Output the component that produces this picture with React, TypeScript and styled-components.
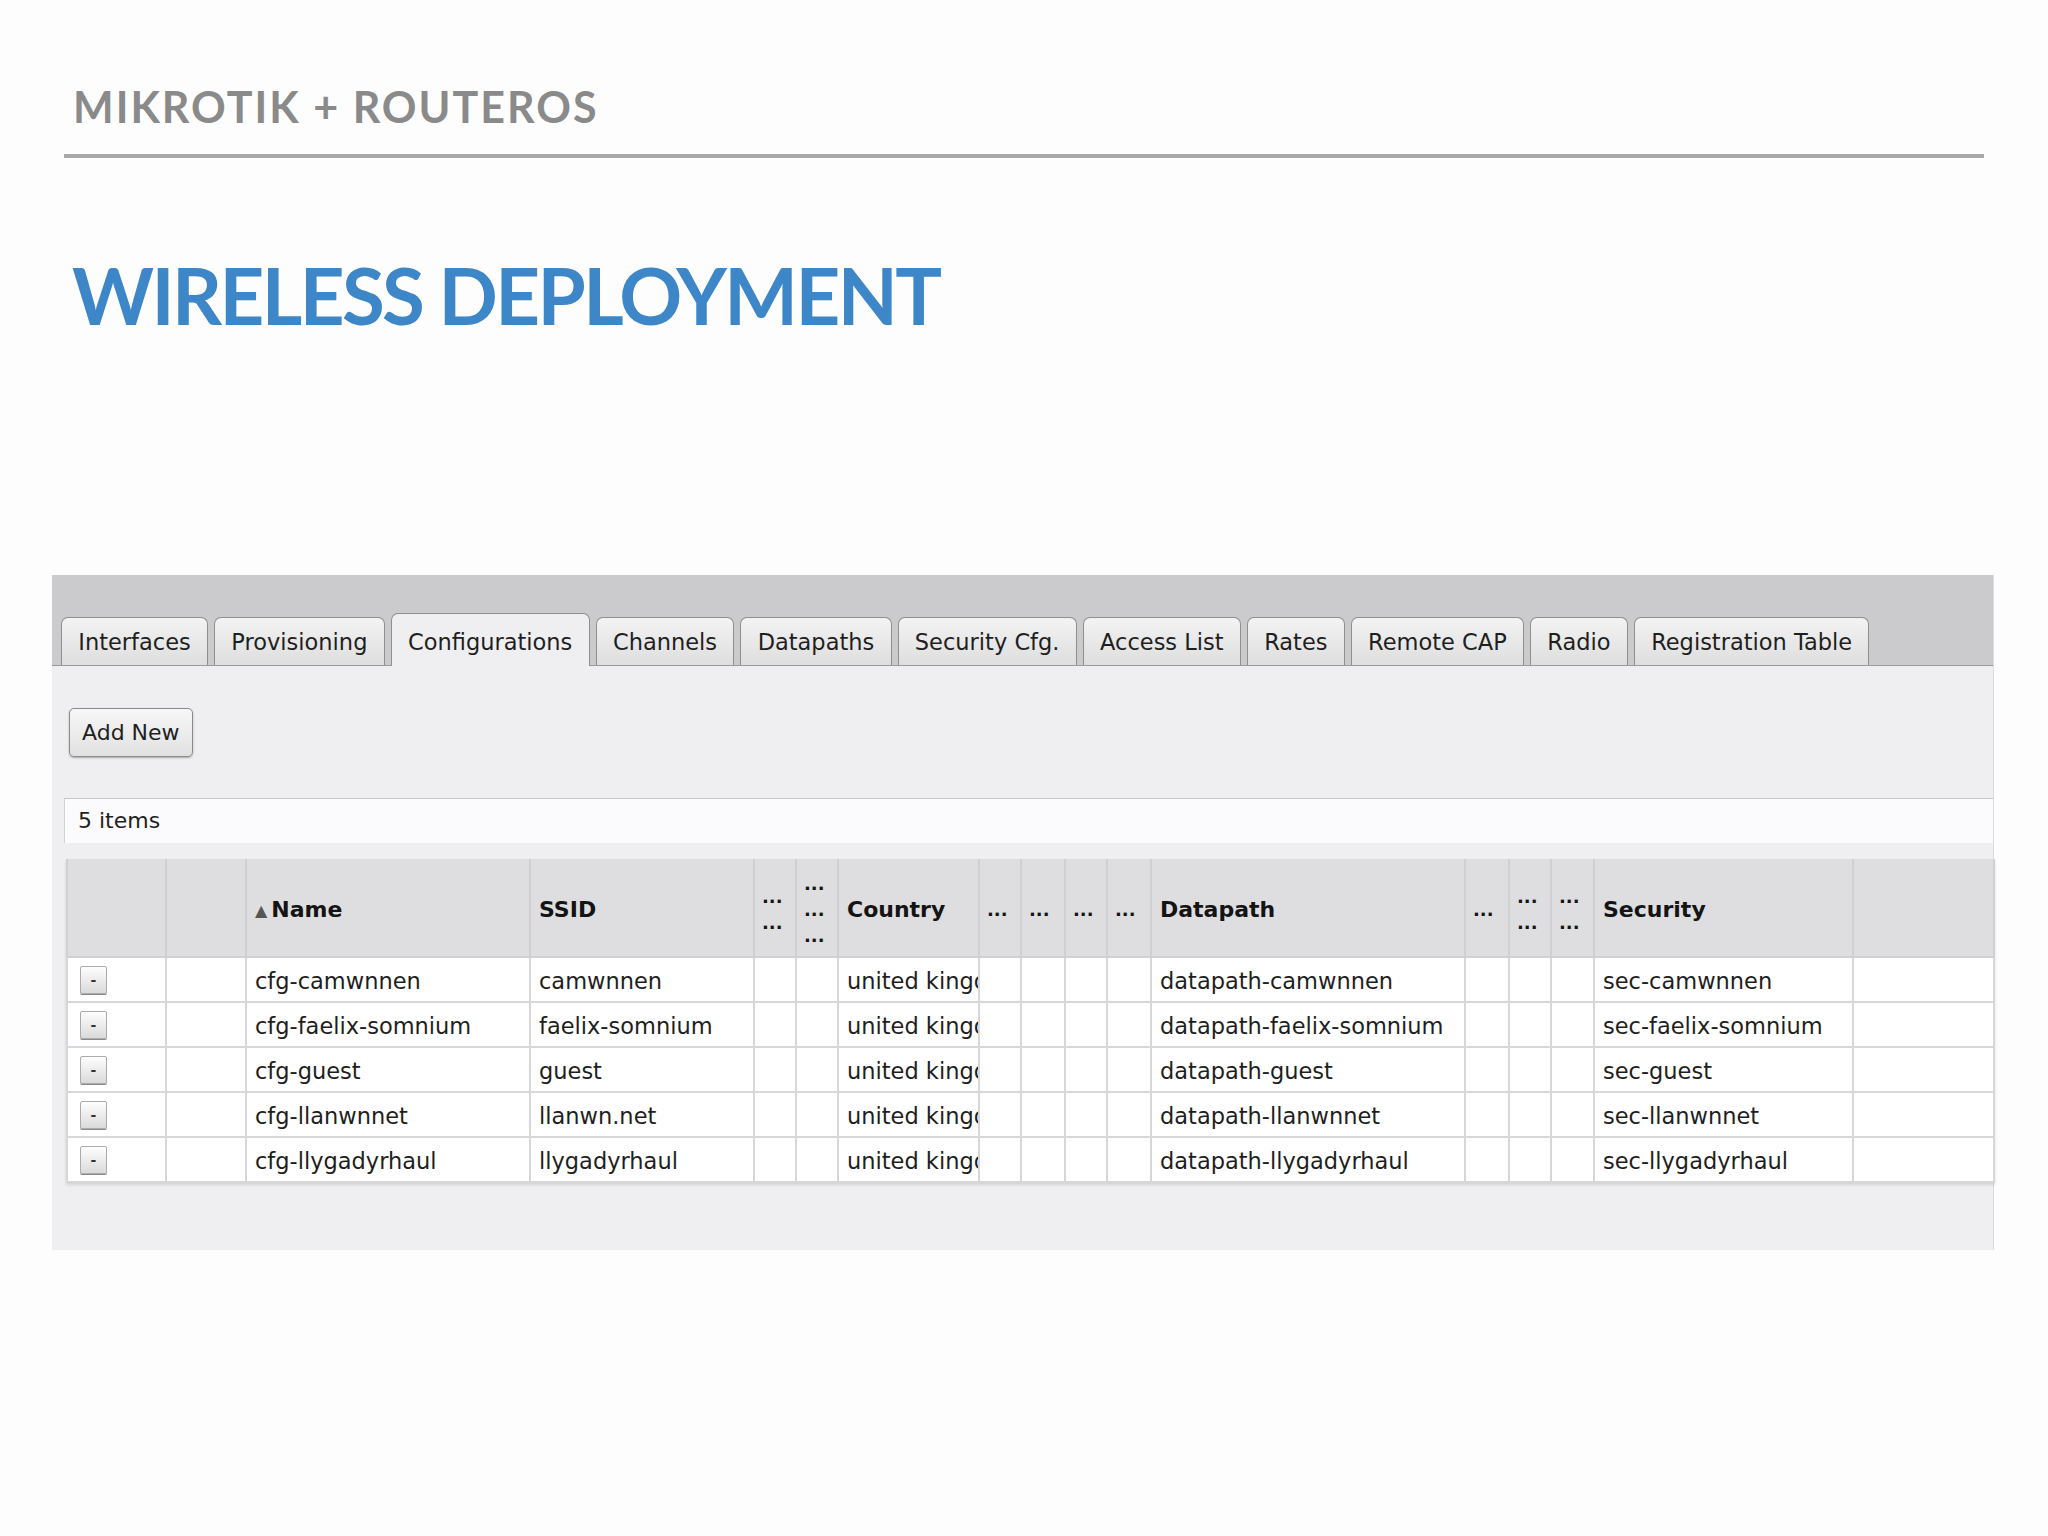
import styled, { createGlobalStyle } from "styled-components";

const GlobalStyle = createGlobalStyle`
  body {
    margin: 0;
    background: #fdfdfd;
    font-family: "DejaVu Sans", Verdana, sans-serif;
  }
`;

const Page = styled.div`
  width: 2048px;
  padding-top: 81px;
`;

const Header = styled.div`
  margin: 0 64px;
  padding: 0 0 21px 9px;
  border-bottom: 4px solid #a9a9a9;
`;

const Kicker = styled.div`
  font-family: Lato, "Open Sans", sans-serif;
  font-weight: 700;
  font-size: 43px;
  line-height: 1.2;
  letter-spacing: 2px;
  color: #8a8a8a;
`;

const Title = styled.h1`
  margin: 91px 0 0 72px;
  font-family: Lato, "Open Sans", sans-serif;
  font-weight: 700;
  font-size: 78px;
  line-height: 1.2;
  letter-spacing: -2.6px;
  color: #3d87c8;
`;

const Panel = styled.div`
  margin: 233px 0 0 52px;
  width: 1941px;
  background: #efeef0;
  border-right: 1px solid #dcdcdc;
`;

const TabStrip = styled.div`
  display: flex;
  align-items: flex-end;
  gap: 6px;
  height: 48px;
  padding: 42px 0 0 9px;
  background: #cbcacc;
  border-bottom: 1px solid #9a9a9a;
`;

const Tab = styled.div<{ $active?: boolean }>`
  box-sizing: border-box;
  height: ${(p) => (p.$active ? "53px" : "48px")};
  margin-bottom: ${(p) => (p.$active ? "-1px" : "0")};
  padding: ${(p) => (p.$active ? "4px" : "0")} 16.3px 0;
  display: flex;
  align-items: center;
  border: 1px solid #8f8f8f;
  border-bottom: none;
  border-radius: 7px 7px 0 0;
  background: ${(p) =>
    p.$active ? "#efeef0" : "linear-gradient(#f3f3f3, #dedede)"};
  font-size: 22.5px;
  color: #1f1f1f;
  white-space: nowrap;
`;

const Content = styled.div`
  padding: 42px 0 67px 0;
`;

const AddButton = styled.button`
  box-sizing: border-box;
  margin-left: 17px;
  height: 49px;
  padding: 0 12px;
  border: 1px solid #8c8c8c;
  border-radius: 5px;
  background: linear-gradient(#f7f7f7, #e1e1e1);
  box-shadow: 0 1px 2px rgba(0, 0, 0, 0.3);
  font-family: "DejaVu Sans", Verdana, sans-serif;
  font-size: 22px;
  color: #1f1f1f;
`;

const ItemsBar = styled.div`
  margin: 41px 0 0 12px;
  height: 44px;
  line-height: 44px;
  padding-left: 13px;
  background: #fbfafc;
  border-top: 1px solid #c6c5c7;
  border-left: 1px solid #d2d1d3;
  font-size: 22px;
  color: #1f1f1f;
`;

const Table = styled.table`
  margin: 16px 0 0 14px;
  width: 1927px;
  table-layout: fixed;
  border-collapse: collapse;
  box-shadow: 0 2px 3px rgba(0, 0, 0, 0.12);
`;

const HeadCell = styled.th<{ $dots?: boolean }>`
  height: 92px;
  padding: 5px ${(p) => (p.$dots ? "7px" : "8px")} 0;
  background: #dedddf;
  border: 2px solid #d0cfd1;
  border-top: none;
  text-align: left;
  vertical-align: middle;
  font-size: ${(p) => (p.$dots ? "18px" : "22px")};
  line-height: 26px;
  font-weight: 700;
  color: #141414;
  white-space: pre;
  overflow: hidden;
`;

const SortArrow = styled.span`
  font-size: 16px;
  color: #555;
  margin-right: 4px;
  vertical-align: 1px;
`;

const Cell = styled.td<{ $lead?: boolean }>`
  height: 40px;
  padding: 3px ${(p) => (p.$lead ? "0 0 12px" : "8px 0")};
  background: #fff;
  border: 2px solid #d7d6d8;
  font-size: 22.5px;
  color: #1e1e1e;
  white-space: nowrap;
  overflow: hidden;
`;

const MiniButton = styled.div`
  box-sizing: border-box;
  width: 27px;
  height: 28px;
  margin-top: -3px;
  display: flex;
  align-items: center;
  justify-content: center;
  border: 1px solid #ababab;
  border-radius: 2px;
  background: linear-gradient(#fefefe, #dadada);
  box-shadow: 0 1px 0 #8a8a8a;
  font-size: 14px;
  font-weight: 700;
  color: #333;
`;

const tabs = [
  "Interfaces",
  "Provisioning",
  "Configurations",
  "Channels",
  "Datapaths",
  "Security Cfg.",
  "Access List",
  "Rates",
  "Remote CAP",
  "Radio",
  "Registration Table",
];

const widths = [99, 80, 284, 224, 42, 42, 141, 42, 44, 42, 44, 314, 44, 42, 43, 259, 141];

// header labels; "..." are columns too narrow for their title
const heads = [
  "",
  "",
  "Name",
  "SSID",
  "...\n...",
  "...\n...\n...",
  "Country",
  "...",
  "...",
  "...",
  "...",
  "Datapath",
  "...",
  "...\n...",
  "...\n...",
  "Security",
  "",
];

const rows = [
  ["cfg-camwnnen", "camwnnen", "datapath-camwnnen", "sec-camwnnen"],
  ["cfg-faelix-somnium", "faelix-somnium", "datapath-faelix-somnium", "sec-faelix-somnium"],
  ["cfg-guest", "guest", "datapath-guest", "sec-guest"],
  ["cfg-llanwnnet", "llanwn.net", "datapath-llanwnnet", "sec-llanwnnet"],
  ["cfg-llygadyrhaul", "llygadyrhaul", "datapath-llygadyrhaul", "sec-llygadyrhaul"],
];

export default function App() {
  return (
    <>
      <GlobalStyle />
      <Page>
        <Header>
          <Kicker>MIKROTIK + ROUTEROS</Kicker>
        </Header>
        <Title>WIRELESS DEPLOYMENT</Title>
        <Panel>
          <TabStrip>
            {tabs.map((t) => (
              <Tab key={t} $active={t === "Configurations"}>
                {t}
              </Tab>
            ))}
          </TabStrip>
          <Content>
            <AddButton>Add New</AddButton>
            <ItemsBar>5 items</ItemsBar>
            <Table>
              <colgroup>
                {widths.map((w, i) => (
                  <col key={i} style={{ width: w }} />
                ))}
              </colgroup>
              <thead>
                <tr>
                  {heads.map((h, i) => (
                    <HeadCell key={i} $dots={h.startsWith("...")}>
                      {i === 2 && <SortArrow>▲</SortArrow>}
                      {h}
                    </HeadCell>
                  ))}
                </tr>
              </thead>
              <tbody>
                {rows.map(([name, ssid, datapath, security]) => (
                  <tr key={name}>
                    <Cell $lead>
                      <MiniButton>-</MiniButton>
                    </Cell>
                    <Cell />
                    <Cell>{name}</Cell>
                    <Cell>{ssid}</Cell>
                    <Cell />
                    <Cell />
                    <Cell>united kingdom</Cell>
                    <Cell />
                    <Cell />
                    <Cell />
                    <Cell />
                    <Cell>{datapath}</Cell>
                    <Cell />
                    <Cell />
                    <Cell />
                    <Cell>{security}</Cell>
                    <Cell />
                  </tr>
                ))}
              </tbody>
            </Table>
          </Content>
        </Panel>
      </Page>
    </>
  );
}
